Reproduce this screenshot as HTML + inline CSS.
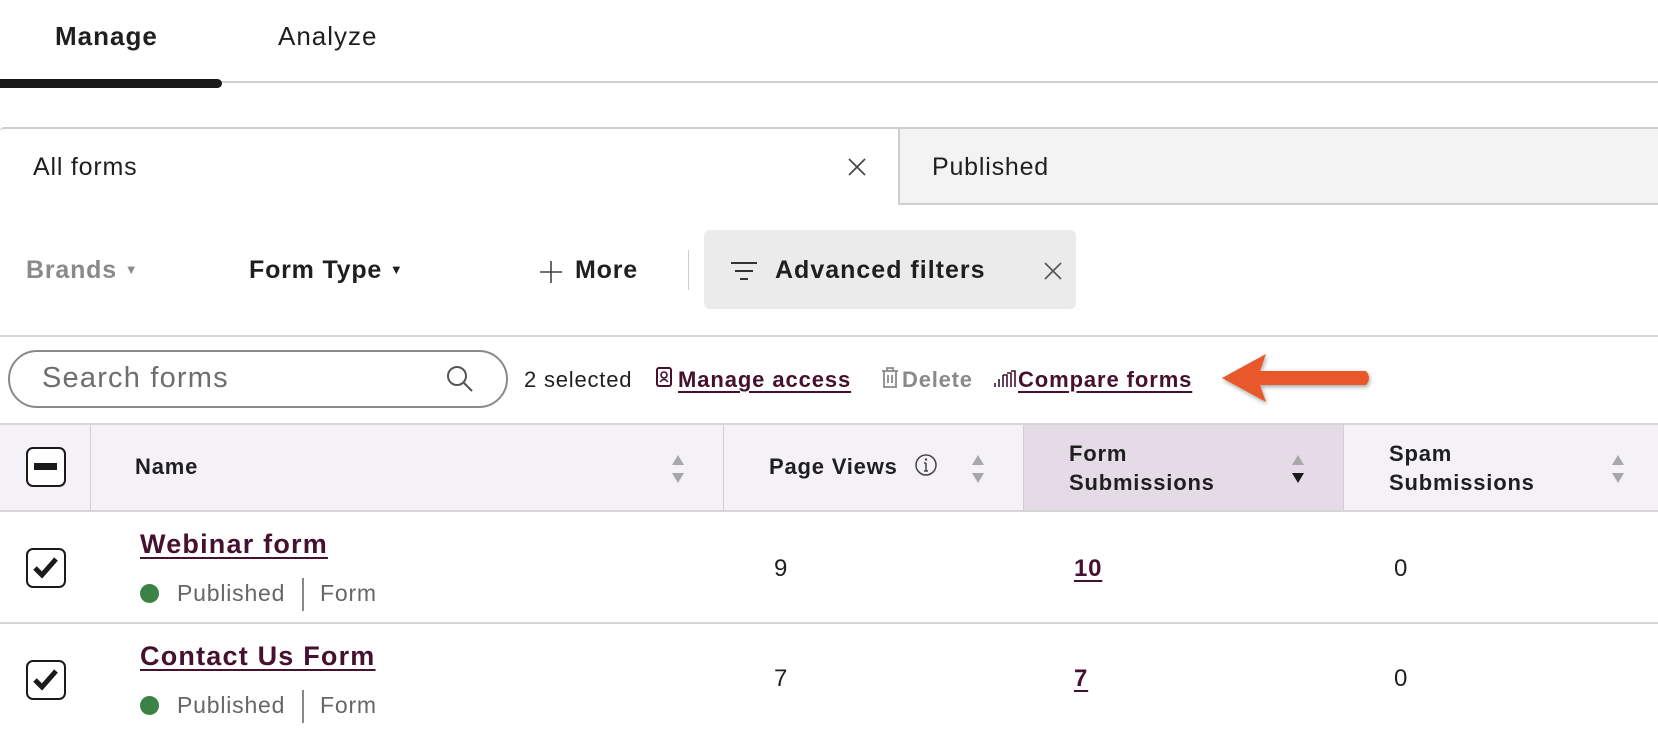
<!DOCTYPE html>
<html><head><meta charset="utf-8"><style>
*{box-sizing:border-box;margin:0;padding:0}
body{width:1658px;height:734px;overflow:hidden;background:#fff;font-family:"Liberation Sans",Arial,sans-serif;color:#1f1f1f;position:relative;letter-spacing:0.8px}
.a{position:absolute;white-space:nowrap}
.b{font-weight:bold}
.lnk{color:#45112f;font-weight:bold;text-decoration:underline;text-underline-offset:4px}
.vl{position:absolute;width:1px;background:#d0d0d0}
.cb{position:absolute;width:40px;height:40px;border:2.5px solid #1a1a1a;border-radius:7px;background:#fff}
</style></head><body>
<div class="a b" style="left:55px;top:21px;font-size:26px;letter-spacing:1px">Manage</div>
<div class="a" style="left:278px;top:21px;font-size:26px;letter-spacing:1px">Analyze</div>
<div class="a" style="left:0;top:81px;width:1658px;height:2px;background:#cfcfcf"></div>
<div class="a" style="left:0;top:79px;width:222px;height:9px;background:#1a1a1a;border-radius:0 5px 5px 0"></div>
<div class="a" style="left:0;top:127px;width:1658px;height:78px;border-top:2px solid #cfcfcf;border-radius:4px 0 0 0"></div>
<div class="a" style="left:898px;top:129px;width:760px;height:76px;background:#f3f3f3;border-left:2px solid #cfcfcf;border-bottom:2px solid #cfcfcf"></div>
<div class="a" style="left:33px;top:153px;font-size:25px">All forms</div>
<svg class="a" style="left:847px;top:157px" width="20" height="20"><path d="M2 2L18 18M18 2L2 18" stroke="#444" stroke-width="1.6"/></svg>
<div class="a" style="left:932px;top:153px;font-size:25px">Published</div>
<div class="a b" style="left:26px;top:256px;font-size:25px;color:#8a8a8a">Brands <span style="font-size:13px;vertical-align:4px">▼</span></div>
<div class="a b" style="left:249px;top:256px;font-size:25px">Form Type <span style="font-size:13px;vertical-align:4px">▼</span></div>
<svg class="a" style="left:539px;top:260px" width="24" height="24"><path d="M12 1V23M1 12H23" stroke="#444" stroke-width="1.6"/></svg>
<div class="a b" style="left:575px;top:256px;font-size:25px">More</div>
<div class="vl" style="left:688px;top:250px;height:40px;background:#ccc"></div>
<div class="a" style="left:704px;top:230px;width:372px;height:79px;background:#ebebeb;border-radius:6px"></div>
<svg class="a" style="left:730px;top:260px" width="28" height="22"><path d="M1 3H27M5 11H23M10 19H18" stroke="#333" stroke-width="2"/></svg>
<div class="a b" style="left:775px;top:256px;font-size:25px;letter-spacing:1px">Advanced filters</div>
<svg class="a" style="left:1043px;top:261px" width="20" height="20"><path d="M2 2L18 18M18 2L2 18" stroke="#555" stroke-width="1.6"/></svg>
<div class="a" style="left:0;top:335px;width:1658px;height:2px;background:#d6d6d6"></div>
<div class="a" style="left:8px;top:350px;width:500px;height:58px;border:2px solid #8a8a8a;border-radius:29px"></div>
<div class="a" style="left:42px;top:362px;font-size:29px;color:#6e6e6e;letter-spacing:1.2px">Search forms</div>
<svg class="a" style="left:446px;top:365px" width="28" height="28"><circle cx="11" cy="11" r="9" fill="none" stroke="#555" stroke-width="2"/><path d="M18 18L26 26" stroke="#555" stroke-width="2"/></svg>
<div class="a" style="left:524px;top:367px;font-size:22px">2 selected</div>
<svg class="a" style="left:655px;top:367px" width="18" height="22"><rect x="2" y="1" width="14" height="18" rx="2" fill="none" stroke="#45112f" stroke-width="2"/><circle cx="9" cy="8" r="3" fill="none" stroke="#45112f" stroke-width="1.6"/><path d="M5 15Q9 10 13 15" fill="none" stroke="#45112f" stroke-width="1.6"/></svg>
<div class="a lnk" style="left:678px;top:367px;font-size:22px;letter-spacing:0.9px">Manage access</div>
<svg class="a" style="left:881px;top:367px" width="18" height="22"><path d="M1 4H17M6 4V1H12V4M3 4V20H15V4M7 8V16M11 8V16" fill="none" stroke="#8a8a8a" stroke-width="1.8"/></svg>
<div class="a b" style="left:902px;top:367px;font-size:22px;color:#8a8a8a">Delete</div>
<svg class="a" style="left:994px;top:370px" width="24" height="18"><path d="M1 17V13M5 17V9M9 17V5M9 5H13V17M13 3H17V17M17 1H21V17" fill="none" stroke="#45112f" stroke-width="1.6"/></svg>
<div class="a lnk" style="left:1018px;top:367px;font-size:22px;letter-spacing:0.9px">Compare forms</div>
<svg class="a" style="left:1216px;top:350px" width="160" height="56"><defs><filter id="s"><feDropShadow dx="1" dy="2" stdDeviation="2" flood-opacity=".35"/></filter></defs><path d="M6 28L50 4L44 21H150Q156 28 150 35H44L50 52Z" fill="#e8582a" filter="url(#s)"/></svg>
<div class="a" style="left:0;top:423px;width:1658px;height:89px;background:#f5f2f7;border-top:2px solid #d6d6d6;border-bottom:2px solid #d6d6d6"></div>
<div class="a" style="left:1023px;top:425px;width:320px;height:85px;background:#e5dbe7"></div>
<div class="vl" style="left:90px;top:425px;height:85px"></div>
<div class="vl" style="left:723px;top:425px;height:85px"></div>
<div class="vl" style="left:1023px;top:425px;height:85px"></div>
<div class="vl" style="left:1343px;top:425px;height:85px"></div>
<div class="cb" style="left:26px;top:447px"><div style="position:absolute;left:6px;top:14px;width:23px;height:7px;background:#1a1a1a"></div></div>
<div class="a b" style="left:135px;top:454px;font-size:22px">Name</div>
<div class="a b" style="left:769px;top:454px;font-size:22px">Page Views</div>
<svg class="a" style="left:914px;top:453px" width="24" height="24"><circle cx="12" cy="12" r="10" fill="none" stroke="#444" stroke-width="1.5"/><path d="M12 10V18M10 10H12M10 18H14" stroke="#444" stroke-width="1.5"/><circle cx="12" cy="6.5" r="1.2" fill="#444"/></svg>
<div class="a b" style="left:1069px;top:439px;font-size:22px;line-height:29px">Form<br>Submissions</div>
<div class="a b" style="left:1389px;top:439px;font-size:22px;line-height:29px">Spam<br>Submissions</div>
<svg class="a" style="left:671px;top:454px" width="14" height="30"><path d="M7 1L13 11H1ZM7 29L13 19H1Z" fill="#a8a8a8"/></svg>
<svg class="a" style="left:971px;top:454px" width="14" height="30"><path d="M7 1L13 11H1ZM7 29L13 19H1Z" fill="#a8a8a8"/></svg>
<svg class="a" style="left:1291px;top:454px" width="14" height="30"><path d="M7 1L13 11H1Z" fill="#a8a8a8"/><path d="M7 29L13 19H1Z" fill="#1a1a1a"/></svg>
<svg class="a" style="left:1611px;top:454px" width="14" height="30"><path d="M7 1L13 11H1ZM7 29L13 19H1Z" fill="#a8a8a8"/></svg>
<div class="a" style="left:0;top:622px;width:1658px;height:2px;background:#d6d6d6"></div>
<div class="cb" style="left:26px;top:548px"><svg width="36" height="36" style="position:absolute;left:0;top:0"><path d="M7 18L14 25L28 9" fill="none" stroke="#1a1a1a" stroke-width="5"/></svg></div>
<div class="a lnk" style="left:140px;top:529px;font-size:27px;letter-spacing:1.2px">Webinar form</div>
<div class="a" style="left:140px;top:584px;width:19px;height:19px;border-radius:50%;background:#3a8245"></div>
<div class="a" style="left:177px;top:580px;font-size:23px;color:#666">Published</div>
<div class="a" style="left:302px;top:578px;width:2px;height:33px;background:#888"></div>
<div class="a" style="left:320px;top:580px;font-size:23px;color:#666">Form</div>
<div class="a" style="left:774px;top:555px;font-size:24px">9</div>
<div class="a lnk" style="left:1074px;top:555px;font-size:24px">10</div>
<div class="a" style="left:1394px;top:555px;font-size:24px">0</div>
<div class="cb" style="left:26px;top:660px"><svg width="36" height="36" style="position:absolute;left:0;top:0"><path d="M7 18L14 25L28 9" fill="none" stroke="#1a1a1a" stroke-width="5"/></svg></div>
<div class="a lnk" style="left:140px;top:641px;font-size:27px;letter-spacing:1.2px">Contact Us Form</div>
<div class="a" style="left:140px;top:696px;width:19px;height:19px;border-radius:50%;background:#3a8245"></div>
<div class="a" style="left:177px;top:692px;font-size:23px;color:#666">Published</div>
<div class="a" style="left:302px;top:690px;width:2px;height:33px;background:#888"></div>
<div class="a" style="left:320px;top:692px;font-size:23px;color:#666">Form</div>
<div class="a" style="left:774px;top:665px;font-size:24px">7</div>
<div class="a lnk" style="left:1074px;top:665px;font-size:24px">7</div>
<div class="a" style="left:1394px;top:665px;font-size:24px">0</div>
</body></html>
